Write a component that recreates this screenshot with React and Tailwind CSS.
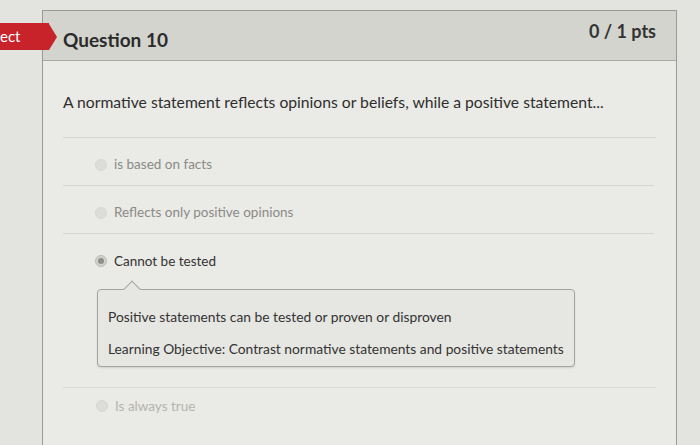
import React from "react";

const Radio = ({ checked, faded }) => (
  <span
    className={
      "inline-flex h-[12px] w-[12px] items-center justify-center rounded-full border " +
      (faded ? "border-[#d6d6d2] bg-[#dcdcd8]" : "border-[#bdbdb8] bg-[#d2d2cd]")
    }
  >
    {checked && <span className="h-[6px] w-[6px] rounded-full bg-[#8e8e8a]" />}
  </span>
);

const Option = ({ text, checked, tone, border = true }) => (
  <div className={"flex h-[48px] items-center pl-[32px] pt-[6px] " + (border ? "border-b border-[#d3d3cf]" : "")}>
    <Radio checked={checked} faded={!checked} />
    <span className={"ml-[7px] text-[13.5px] " + tone}>{text}</span>
  </div>
);

export default function App() {
  return (
    <div
      className="relative h-[445px] w-[700px] overflow-hidden bg-[#e3e3e0] pt-[10px] pl-[42px]"
      style={{ fontFamily: "Lato, 'Open Sans', sans-serif" }}
    >
      {/* red tab */}
      <div className="absolute left-0 top-[23px] flex h-[27px] items-center">
        <div className="flex h-full w-[49px] items-center bg-[#c8232b] text-[15px] text-white">
          ect
        </div>
        <div className="h-0 w-0 border-y-[13.5px] border-l-[8px] border-y-transparent border-l-[#c8232b]" />
      </div>

      <div className="h-[440px] w-[635px] border border-[#9a9a96] bg-[#eaeae6]">
        <div className="flex h-[50px] items-start justify-between border-b border-[#a9a9a5] bg-[#d3d4ce] px-[20px]">
          <div className="pt-[19px] text-[19px] font-bold leading-none text-[#2b2b2b]">Question 10</div>
          <div className="pt-[11px] text-[18px] font-bold leading-none text-[#333]">0 / 1 pts</div>
        </div>

        <div className="px-[20px]">
          <div className="flex h-[77px] items-center border-b border-[#d3d3cf] pt-[7px] text-[15.7px] text-[#2e2e2e]">
            A normative statement reflects opinions or beliefs, while a positive statement...
          </div>
          <div className="mr-[2px]">
            <Option text="is based on facts" tone="text-[#8a8a87]" />
            <Option text="Reflects only positive opinions" tone="text-[#8a8a87]" />
            <Option text="Cannot be tested" checked tone="text-[#333]" border={false} />
          </div>

          <div className="relative ml-[34px] mt-[7px] w-[478px] rounded-[4px] border border-[#a4a4a0] bg-[#e6e6e2] px-[10px] pt-[18px] pb-[8px] text-[13.8px] text-[#333] shadow-[0_1px_2px_rgba(0,0,0,0.12)]">
            <div className="absolute -top-[7px] left-[28px] h-[12px] w-[12px] rotate-45 border-l border-t border-[#a4a4a0] bg-[#e6e6e2]" />
            <div className="leading-[18px]">Positive statements can be tested or proven or disproven</div>
            <div className="mt-[14px] leading-[18px]">Learning Objective: Contrast normative statements and positive statements</div>
          </div>

          <div className="mt-[20px] border-t border-[#d8d8d4]">
            <div className="flex h-[36px] items-center pl-[33px]">
              <Radio faded />
              <span className="ml-[7px] text-[13.5px] text-[#b4b4b0]">Is always true</span>
            </div>
          </div>
        </div>
      </div>
    </div>
  );
}
